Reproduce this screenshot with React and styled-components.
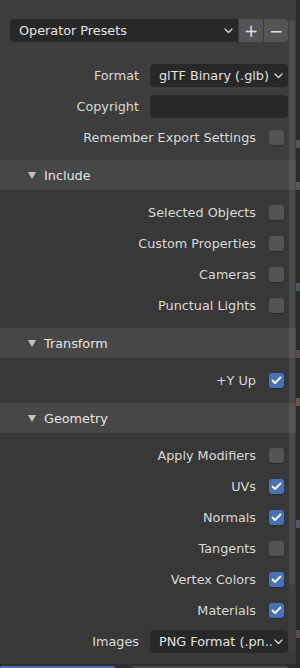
import React from 'react';
import styled, { createGlobalStyle } from 'styled-components';

const GlobalStyle = createGlobalStyle`
    html, body {
        margin: 0;
        padding: 0;
        background: #303030;
    }

    body {
        width: 300px;
        height: 668px;
        overflow: hidden;
        font-family: "DejaVu Sans", "Liberation Sans", sans-serif;
        font-size: 12.8px;
        color: #e2e2e2;
    }
`;

const include = [
    { label: 'Selected Objects', checked: false },
    { label: 'Custom Properties', checked: false },
    { label: 'Cameras', checked: false },
    { label: 'Punctual Lights', checked: false },
];

const transform = [{ label: '+Y Up', checked: true }];

const geometry = [
    { label: 'Apply Modifiers', checked: false },
    { label: 'UVs', checked: true },
    { label: 'Normals', checked: true },
    { label: 'Tangents', checked: false },
    { label: 'Vertex Colors', checked: true },
    { label: 'Materials', checked: true },
];

function Chevron() {
    return (
        <svg width='9' height='6' viewBox='0 0 9 6'>
            <polyline points='1,1 4.5,4.5 8,1' fill='none' stroke='#d8d8d8' strokeWidth='1.3' strokeLinecap='round' strokeLinejoin='round' />
        </svg>
    );
}

function Check({ checked }) {
    return (
        <CheckBox checked={checked}>
            {checked &&
                <svg width='11' height='9' viewBox='0 0 11 9'>
                    <polyline points='1.5,4.5 4,7 9.5,1.5' fill='none' stroke='#ffffff' strokeWidth='1.8' strokeLinecap='round' strokeLinejoin='round' />
                </svg>
            }
        </CheckBox>
    );
}

function Section({ title, rows, children }) {
    return (
        <>
            <SectionHeader>
                <Triangle />
                <span>{title}</span>
            </SectionHeader>

            <SectionBody>
                {rows.map((row) => (
                    <CheckRow key={row.label}>
                        <span>{row.label}</span>
                        <Check checked={row.checked} />
                    </CheckRow>
                ))}
                {children}
            </SectionBody>
        </>
    );
}

export default function App() {
    return (
        <>
            <GlobalStyle />
            <Page>
                <Main>
                    <TopArea>
                        <PresetRow>
                            <PresetSelect>
                                <span>Operator Presets</span>
                                <Chevron />
                            </PresetSelect>
                            <PresetButton>+</PresetButton>
                            <PresetButton last>&minus;</PresetButton>
                        </PresetRow>

                        <FieldRow>
                            <FieldLabel>Format</FieldLabel>
                            <Select>
                                <span>glTF Binary (.glb)</span>
                                <Chevron />
                            </Select>
                        </FieldRow>

                        <FieldRow>
                            <FieldLabel>Copyright</FieldLabel>
                            <TextField />
                        </FieldRow>

                        <CheckRow>
                            <span>Remember Export Settings</span>
                            <Check checked={false} />
                        </CheckRow>
                    </TopArea>

                    <Section title='Include' rows={include} />
                    <Section title='Transform' rows={transform} />
                    <Section title='Geometry' rows={geometry}>
                        <FieldRow>
                            <FieldLabel>Images</FieldLabel>
                            <Select>
                                <span>PNG Format (.pn..</span>
                                <Chevron />
                            </Select>
                        </FieldRow>
                    </Section>

                    <Footer>
                        <FooterButton primary />
                        <FooterButton />
                    </Footer>

                    <ScrollTrack>
                        <ScrollThumb />
                    </ScrollTrack>
                </Main>

                <EdgeStrip>
                    <Tick top={140} color='#575757' />
                    <Tick top={182} color='#575757' />
                    <Tick top={283} color='#4c5660' />
                    <Tick top={350} color='#5a4c54' />
                    <Tick top={398} color='#6a5640' />
                    <Tick top={520} color='#4c5a66' />
                    <Tick top={630} color='#5a4c54' />
                </EdgeStrip>
            </Page>
        </>
    );
}

const Page = styled.div`
    display: flex;
    width: 300px;
    height: 668px;
`;

const Main = styled.div`
    position: relative;
    width: 296px;
    display: flex;
    flex-direction: column;
    background: #303030;
`;

const TopArea = styled.div`
    background: #3d3d3d;
    padding: 19px 0 7px;
    display: flex;
    flex-direction: column;
`;

const PresetRow = styled.div`
    display: flex;
    height: 23px;
    margin: 0 8px 18px 10px;
`;

const PresetSelect = styled.div`
    flex: 1;
    display: flex;
    align-items: center;
    justify-content: space-between;
    padding: 0 5px 0 9px;
    background: #282828;
    border-radius: 4px 0 0 4px;
    color: #e4e4e4;
`;

const PresetButton = styled.div`
    width: 24px;
    display: flex;
    align-items: center;
    justify-content: center;
    background: #545454;
    margin-left: 1px;
    font-size: 17px;
    color: #e0e0e0;
    border-radius: ${(p) => (p.last ? '0 4px 4px 0' : '0')};
`;

const FieldRow = styled.div`
    display: grid;
    grid-template-columns: 139px 1fr;
    column-gap: 11px;
    align-items: center;
    height: 31px;
    padding-right: 8px;
`;

const FieldLabel = styled.span`
    text-align: right;
    color: #dadada;
`;

const Select = styled.div`
    height: 23px;
    display: flex;
    align-items: center;
    justify-content: space-between;
    padding: 0 5px 0 9px;
    background: #282828;
    border-radius: 4px;
    color: #e2e2e2;
    white-space: nowrap;
`;

const TextField = styled.div`
    height: 23px;
    background: #282828;
    border-radius: 4px;
`;

const CheckRow = styled.div`
    display: flex;
    align-items: center;
    justify-content: flex-end;
    gap: 13px;
    height: 31px;
    padding-right: 12px;
    color: #dadada;
`;

const CheckBox = styled.div`
    width: 15px;
    height: 15px;
    border-radius: 3px;
    box-sizing: border-box;
    display: flex;
    align-items: center;
    justify-content: center;
    background: ${(p) => (p.checked ? '#4772b3' : '#545454')};
    box-shadow: 0 1px 1px rgba(0, 0, 0, 0.25);
`;

const SectionHeader = styled.div`
    height: 30px;
    display: flex;
    align-items: center;
    gap: 8px;
    padding-left: 28px;
    background: #474747;
    color: #e4e4e4;
`;

const Triangle = styled.div`
    width: 0;
    height: 0;
    margin-top: 1px;
    border-left: 4px solid transparent;
    border-right: 4px solid transparent;
    border-top: 7px solid #c4c4c4;
`;

const SectionBody = styled.div`
    background: #383838;
    padding: 7px 0;
    display: flex;
    flex-direction: column;
`;

const Footer = styled.div`
    flex: 1;
    display: flex;
    align-items: flex-end;
    gap: 17px;
    background: #2e2e2e;
`;

const FooterButton = styled.div`
    height: 2px;
    width: ${(p) => (p.primary ? '115px' : '156px')};
    background: ${(p) => (p.primary ? '#4772b3' : '#4a4a4a')};
    border-radius: 3px 3px 0 0;
`;

const ScrollTrack = styled.div`
    position: absolute;
    left: 289px;
    top: 20px;
    bottom: 13px;
    width: 6px;
    border-radius: 3px;
    background: rgba(255, 255, 255, 0.03);
`;

const ScrollThumb = styled.div`
    height: 565px;
    border-radius: 3px;
    background: rgba(255, 255, 255, 0.06);
`;

const EdgeStrip = styled.div`
    position: relative;
    flex: 1;
    background: #2b2b2b;
`;

const Tick = styled.div`
    position: absolute;
    left: 0;
    top: ${(p) => p.top}px;
    width: 4px;
    height: 8px;
    background: ${(p) => p.color};
`;
